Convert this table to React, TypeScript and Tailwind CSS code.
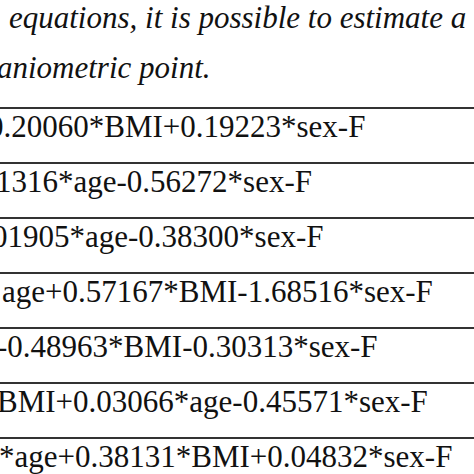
import React from "react";

const rows: { text: string; ml: string }[] = [
  { text: "0.20060*BMI+0.19223*sex-F", ml: "ml-[-12px]" },
  { text: "1316*age-0.56272*sex-F", ml: "ml-[-4px]" },
  { text: "01905*age-0.38300*sex-F", ml: "ml-[-8px]" },
  { text: "age+0.57167*BMI-1.68516*sex-F", ml: "ml-[2px]" },
  { text: "-0.48963*BMI-0.30313*sex-F", ml: "ml-[-3px]" },
  { text: "BMI+0.03066*age-0.45571*sex-F", ml: "ml-[-3px]" },
  { text: "*age+0.38131*BMI+0.04832*sex-F", ml: "ml-[-1px]" },
];

export default function App() {
  return (
    <div className="w-[474px] h-[474px] overflow-hidden bg-white text-[#111]" style={{ fontFamily: '"Liberation Serif", "Times New Roman", serif' }}>
      <div className="pt-[1px] h-[107px] flex flex-col gap-[16px] italic text-[31px] leading-[34px] whitespace-nowrap">
        <div className="ml-[9px]">equations, it is possible to estimate a</div>
        <div className="ml-[-3px]">aniometric point.</div>
      </div>
      {rows.map((r, i) => (
        <div key={i} className="h-[55px] border-t-2 border-[#333] pt-[2px] text-[31px] leading-[31px] whitespace-nowrap">
          <div className={r.ml}>{r.text}</div>
        </div>
      ))}
    </div>
  );
}
